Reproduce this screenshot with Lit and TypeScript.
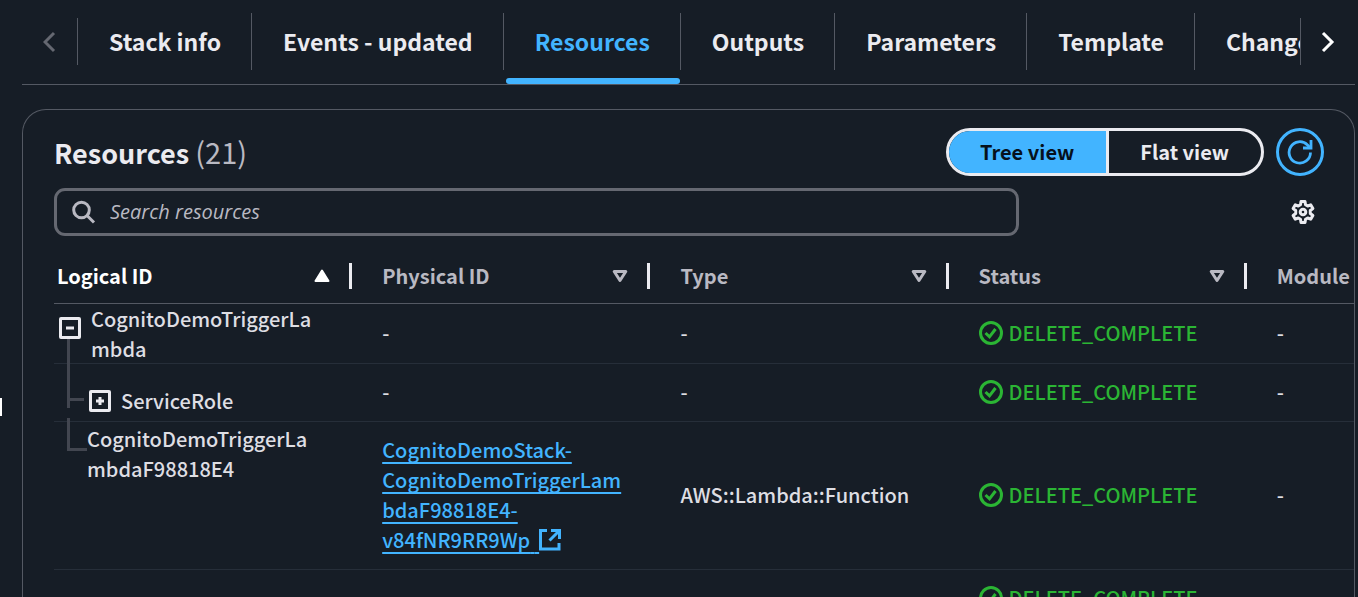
import { LitElement, html, css, svg, nothing } from "lit";
import { customElement, state } from "lit/decorators.js";
import { classMap } from "lit/directives/class-map.js";

interface Resource {
  logicalId: string;
  kind: "parent" | "child" | "leaf" | "plain";
  physicalId?: string;
  type: string;
  status: string;
  module: string;
}

const TABS = ["Stack info", "Events - updated", "Resources", "Outputs", "Parameters", "Template", "Change sets"];
const COLUMNS = ["Logical ID", "Physical ID", "Type", "Status", "Module"];

const RESOURCES: Resource[] = [
  { logicalId: "CognitoDemoTriggerLambda", kind: "parent", type: "-", status: "DELETE_COMPLETE", module: "-" },
  { logicalId: "ServiceRole", kind: "child", type: "-", status: "DELETE_COMPLETE", module: "-" },
  {
    logicalId: "CognitoDemoTriggerLambdaF98818E4",
    kind: "leaf",
    physicalId: "CognitoDemoStack-CognitoDemoTriggerLambdaF98818E4-v84fNR9RR9Wp",
    type: "AWS::Lambda::Function",
    status: "DELETE_COMPLETE",
    module: "-",
  },
  { logicalId: "", kind: "plain", type: "", status: "DELETE_COMPLETE", module: "" },
];

const chevron = (d: string) => html`
  <svg width="14" height="22" viewBox="0 0 14 22" fill="none" stroke="currentColor" stroke-width="3">
    ${svg`<path d=${d} />`}
  </svg>`;

const searchIcon = html`
  <svg width="24" height="24" viewBox="0 0 24 24" fill="none" stroke="currentColor" stroke-width="3" aria-hidden="true">
    <circle cx="9.500" cy="10" r="7.800" />
    <path d="M15 15.500l7 7" />
  </svg>`;

const refreshIcon = html`
  <svg width="26" height="26" viewBox="0 0 26 26" fill="none" stroke="currentColor" stroke-width="2.800" aria-hidden="true">
    <path d="M23.500 13.500a10.700 10.700 0 1 1-3-7.500L23 8.500" />
    <path d="M24 1v8h-8" />
  </svg>`;

const gearIcon = html`
  <svg width="24" height="24" viewBox="0 0 24 24" fill="none" stroke="currentColor" stroke-width="3" stroke-linejoin="round" aria-hidden="true">
    <path d="M10 1.500h4l.5 3.200 2.200 1.300 3-1.200 2.200 3.700-2.600 2v3l2.600 2-2.200 3.700-3-1.200-2.200 1.300-.5 3.200h-4l-.5-3.200L7.300 18l-3 1.200-2.200-3.700 2.600-2v-3l-2.600-2 2.200-3.700 3 1.200 2.200-1.300z" />
    <circle cx="12" cy="12" r="2.800" />
  </svg>`;

const successIcon = html`
  <svg class="fixed" width="24" height="24" viewBox="0 0 24 24" fill="none" stroke="currentColor" stroke-width="3" aria-hidden="true">
    <circle cx="12" cy="12" r="10.500" />
    <path d="M6.500 12l4 3.800L16.500 8" />
  </svg>`;

const externalIcon = html`
  <svg class="external" width="22" height="22" viewBox="0 0 22 22" fill="none" stroke="currentColor" stroke-width="3" aria-hidden="true">
    <path d="M8 1.500H1.500v18.500H20V14" />
    <path d="M12 1.500h8.500V10M20 2L10.500 11.500" />
  </svg>`;

const sortIcon = (ascending: boolean) => html`
  <svg width="16" height="14" viewBox="0 0 16 14" stroke="currentColor" stroke-linejoin="round" aria-hidden="true">
    ${ascending
      ? svg`<path d="M8 1.500L14.500 12H1.500z" fill="currentColor" stroke-width="2" />`
      : svg`<path d="M8 11.500L2.200 2.500h11.600z" fill="none" stroke-width="3" />`}
  </svg>`;

@customElement("app-root")
export class AppRoot extends LitElement {
  static styles = css`
    :host {
      --page: #161d26;
      --line: #424650;
      --row-line: #262e39;
      --edge: #545963;
      --muted: #656871;
      --text: #dedee3;
      --strong: #ebebf0;
      --soft: #b9b9c2;
      --accent: #42b4ff;
      --success: #2bb534;
      display: block;
      position: relative;
      height: 100vh;
      overflow: hidden;
      background: var(--page);
      color: var(--text);
      font: 500 20px/30px "Noto Sans CJK SC", "Noto Sans", sans-serif;
    }
    * {
      box-sizing: border-box;
    }
    button {
      margin: 0;
      padding: 0;
      border: 0;
      background: none;
      color: inherit;
      font: inherit;
      cursor: pointer;
    }
    svg {
      display: block;
    }

    .edge {
      position: absolute;
      left: 0;
      top: 398px;
      width: 2px;
      height: 18px;
      background: #fff;
    }

    .tabbar {
      display: flex;
      margin: 0 3px 0 22px;
      padding-top: 13px;
      border-bottom: 1px solid var(--edge);
    }
    .scroll {
      display: flex;
      flex: none;
      align-items: center;
      justify-content: center;
      width: 55px;
      height: 47px;
      margin-top: 5px;
      color: #fff;
    }
    .scroll.next {
      border-left: 1px solid var(--edge);
    }
    .scroll:disabled {
      color: var(--muted);
    }
    .tabs {
      display: flex;
      flex: 1;
      min-width: 0;
      overflow: hidden;
    }
    .tab {
      display: flex;
      flex: none;
      flex-direction: column;
      gap: 8px;
      color: var(--strong);
      font-size: 23px;
      font-weight: 700;
    }
    .tab .label {
      height: 57px;
      padding: 0 30px 0 31px;
      border-left: 1px solid var(--edge);
      line-height: 57px;
      white-space: nowrap;
    }
    .tab:first-child .label {
      height: 47px;
      margin: 5px 0;
      line-height: 47px;
    }
    .tab .bar {
      height: 6px;
      margin-left: 3px;
      border-radius: 3px;
    }
    .tab.active {
      color: var(--accent);
    }
    .tab.active .bar {
      background: var(--accent);
    }

    .card {
      margin: 24px 3px 0 22px;
      padding: 18px 30px 0 31px;
      border: 1px solid var(--edge);
      border-radius: 24px 24px 0 0;
      border-bottom: 0;
      min-height: 100vh;
    }
    .heading {
      display: flex;
      align-items: center;
      gap: 12px;
    }
    h1 {
      flex: 1;
      margin: 0;
      color: var(--strong);
      font-size: 27px;
      line-height: 44px;
      font-weight: 700;
    }
    h1 .count {
      color: var(--soft);
      font-size: 29px;
      font-weight: 400;
    }
    .toggle {
      display: flex;
      height: 48px;
      border: 3px solid var(--strong);
      border-radius: 24px;
      overflow: hidden;
    }
    .toggle button {
      padding: 0 32px 0 31px;
      color: var(--strong);
      font-weight: 700;
    }
    .toggle button + button {
      border-left: 3px solid var(--strong);
    }
    .toggle .selected {
      background: var(--accent);
      color: #06111c;
    }
    .refresh {
      display: grid;
      place-items: center;
      width: 48px;
      height: 48px;
      border: 3px solid var(--accent);
      border-radius: 50%;
      color: var(--accent);
    }

    .tools {
      display: flex;
      align-items: center;
      justify-content: space-between;
      margin-top: 12px;
    }
    .search {
      display: flex;
      align-items: center;
      gap: 14px;
      width: 76%;
      height: 48px;
      padding: 0 15px;
      border: 3px solid var(--muted);
      border-radius: 11px;
      color: var(--soft);
    }
    .search input {
      flex: 1;
      min-width: 0;
      padding: 0;
      border: 0;
      outline: 0;
      background: none;
      color: var(--text);
      font: 20px/30px "Open Sans", sans-serif;
    }
    .search input::placeholder {
      color: var(--soft);
      font-style: italic;
      opacity: 1;
    }
    .gear {
      margin-right: 9px;
      color: var(--strong);
    }

    .scroller {
      margin-right: -30px;
      overflow: hidden;
    }
    table {
      width: 1491px;
      table-layout: fixed;
      border-collapse: separate;
      border-spacing: 0;
    }
    th {
      height: 68px;
      padding: 13px 0 0 30px;
      border-bottom: 1px solid var(--edge);
      color: var(--soft);
      font-weight: 700;
      text-align: left;
    }
    th:first-child {
      padding-left: 3px;
      color: #fff;
    }
    .head {
      display: flex;
      align-items: center;
      gap: 20px;
      height: 26px;
      border-right: 3px solid var(--strong);
      padding-right: 19px;
    }
    .head span {
      flex: 1;
    }
    td {
      position: relative;
      padding: 13px 28px 15px 30px;
      box-shadow: inset 0 -1px var(--row-line);
      overflow-wrap: anywhere;
      vertical-align: middle;
    }
    td.logical {
      padding: 0 36px 0 5px;
      vertical-align: top;
    }
    .node {
      display: flex;
      align-items: flex-start;
      gap: 10px;
    }
    .expander {
      display: grid;
      flex: none;
      place-items: center;
      width: 22px;
      height: 22px;
      border: 3px solid var(--strong);
      border-radius: 2px;
      color: var(--strong);
    }
    td.parent .expander {
      margin-top: 13px;
    }
    td.child {
      padding: 22px 36px 0 35px;
    }
    td.child .node {
      align-items: center;
    }
    td.leaf {
      padding: 2px 36px 0 33px;
    }
    td.parent::after,
    td.child::before,
    td.child::after,
    td.leaf::before {
      content: "";
      position: absolute;
      left: 13px;
      width: 3px;
      background: var(--line);
    }
    td.parent::after {
      top: 35px;
      bottom: 0;
    }
    td.child::before {
      top: 0;
      height: 44px;
    }
    td.child::after {
      top: 34px;
      width: 17px;
      height: 3px;
    }
    td.leaf::before {
      top: -4px;
      width: 17px;
      height: 30px;
      border: solid var(--line);
      border-width: 0 0 3px 3px;
      background: none;
    }

    a {
      color: var(--accent);
      text-decoration: underline 2px;
      text-decoration-skip-ink: none;
      text-underline-offset: 4px;
    }
    .external {
      display: inline-block;
      vertical-align: -3px;
    }
    .status {
      display: flex;
      align-items: center;
      gap: 6px;
      color: var(--success);
      white-space: nowrap;
    }
    .fixed {
      flex: none;
    }
  `;

  @state() private activeTab = "Resources";
  @state() private view = "Tree view";

  private renderLogical(r: Resource) {
    const expander =
      r.kind === "parent" || r.kind === "child"
        ? html`<button class="expander" aria-label=${r.kind === "parent" ? "Collapse" : "Expand"}>
            <svg width="10" height="10" viewBox="0 0 10 10" fill="currentColor">
              ${r.kind === "parent"
                ? svg`<path d="M1 3.500h8v3H1z" />`
                : svg`<path d="M1 3.500h2.500V1h3v2.500H9v3H6.500V9h-3V6.500H1z" />`}
            </svg>
          </button>`
        : nothing;
    return html`<td class="logical ${r.kind}"><div class="node">${expander}<span>${r.logicalId}</span></div></td>`;
  }

  private renderPhysical(r: Resource) {
    if (r.physicalId) return html`<a href="#">${r.physicalId}&nbsp;${externalIcon}</a>`;
    return r.kind === "plain" ? nothing : "-";
  }

  render() {
    return html`
      <nav class="tabbar" aria-label="Stack sections">
        <button class="scroll" disabled aria-label="Scroll left">${chevron("M11 2L2 11l9 9")}</button>
        <div class="tabs" role="tablist">
          ${TABS.map(
            (t) => html`<button
              class=${classMap({ tab: true, active: t === this.activeTab })}
              role="tab"
              aria-selected=${t === this.activeTab}
              @click=${() => (this.activeTab = t)}
            ><span class="label">${t}</span><span class="bar"></span></button>`
          )}
        </div>
        <button class="scroll next" aria-label="Scroll right">${chevron("M2 2l9 9-9 9")}</button>
      </nav>
      <span class="edge"></span>
      <main class="card">
        <div class="heading">
          <h1>Resources <span class="count">(21)</span></h1>
          <div class="toggle" role="group">
            ${["Tree view", "Flat view"].map(
              (v) => html`<button
                class=${classMap({ selected: v === this.view })}
                aria-pressed=${v === this.view}
                @click=${() => (this.view = v)}
              >${v}</button>`
            )}
          </div>
          <button class="refresh" aria-label="Refresh">${refreshIcon}</button>
        </div>
        <div class="tools">
          <label class="search">${searchIcon}<input type="text" aria-label="Search resources" placeholder="Search resources" /></label>
          <button class="gear" aria-label="Preferences">${gearIcon}</button>
        </div>
        <div class="scroller">
          <table>
            <thead>
              <tr>
                ${COLUMNS.map((c, i) => html`<th scope="col"><div class="head"><span>${c}</span>${sortIcon(i === 0)}</div></th>`)}
              </tr>
            </thead>
            <tbody>
              ${RESOURCES.map(
                (r) => html`<tr>
                  ${this.renderLogical(r)}
                  <td>${this.renderPhysical(r)}</td>
                  <td>${r.type}</td>
                  <td><div class="status">${successIcon}<span>${r.status}</span></div></td>
                  <td>${r.module}</td>
                </tr>`
              )}
            </tbody>
          </table>
        </div>
      </main>
    `;
  }
}
